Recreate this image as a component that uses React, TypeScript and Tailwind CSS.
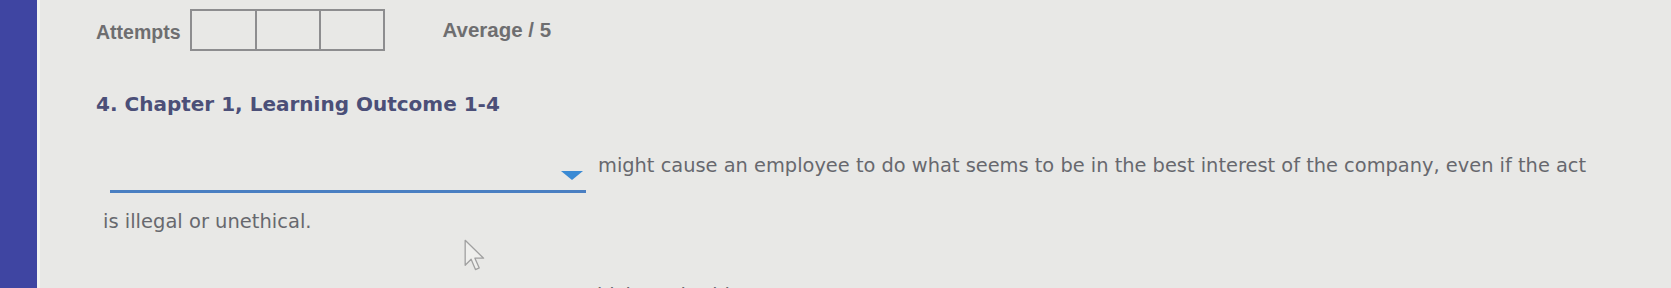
import React from "react";

const Cursor = () => (
  <svg
    className="absolute left-[463px] top-[237px]"
    width="26"
    height="37"
    viewBox="0 0 24 32"
  >
    <path
      d="M2 2 L2 25 L7.5 19.5 L11.5 29 L15 27.5 L11 18.5 L19 18.5 Z"
      fill="#efefed"
      stroke="#a0a0a0"
      strokeWidth="1.2"
      strokeLinejoin="round"
    />
  </svg>
);

const App: React.FC = () => {
  return (
    <div className="relative flex h-[288px] w-[1671px] overflow-hidden bg-[#e8e8e6]">
      <div className="w-[37px] shrink-0 bg-[#3f45a2]" />
      <div className="w-[3px] shrink-0 bg-[#f3f3f1]" />
      <div className="flex-1 pl-[56px] text-[#67686e]">
        {/* attempts row */}
        <div className="mt-[9px] flex items-center font-['Liberation_Sans',Arial,sans-serif] font-bold">
          <span className="mt-[6px] text-[19.5px] text-[#6e6e70]">Attempts</span>
          <div className="ml-[9px] flex h-[42px] border-2 border-[#8d8d8f]">
            <div className="w-[65px] border-r-2 border-[#8d8d8f]" />
            <div className="w-[64px] border-r-2 border-[#8d8d8f]" />
            <div className="w-[62px]" />
          </div>
          <span className="ml-[58px] text-[20.5px] text-[#6e6e70]">Average / 5</span>
        </div>

        {/* question title */}
        <h2 className="mt-[39px] font-['DejaVu_Sans',Verdana,sans-serif] text-[20px] font-bold leading-[28px] text-[#4b4f78]">
          4. Chapter 1, Learning Outcome 1-4
        </h2>

        {/* question body */}
        <div className="mt-[31px] font-['DejaVu_Sans',Verdana,sans-serif] text-[19.5px] leading-[28px]">
          <div className="flex items-start">
            <div className="relative ml-[14px] h-[44px] w-[476px] shrink-0 border-b-[3px] border-[#4a7fc2]">
              <span className="absolute right-[3px] top-[22px] h-0 w-0 border-x-[11px] border-t-[9px] border-x-transparent border-t-[#3a8ad4]" />
            </div>
            <span className="ml-[12px] mt-[3px] whitespace-nowrap text-[19.4px]">
              might cause an employee to do what seems to be in the best interest of the company, even if the act
            </span>
          </div>
          <div className="ml-[7px] mt-[15px]">is illegal or unethical.</div>
          <div className="ml-[485px] mt-[46px] whitespace-nowrap">which act in this case occurs?</div>
        </div>
      </div>
      <Cursor />
    </div>
  );
};

export default App;
